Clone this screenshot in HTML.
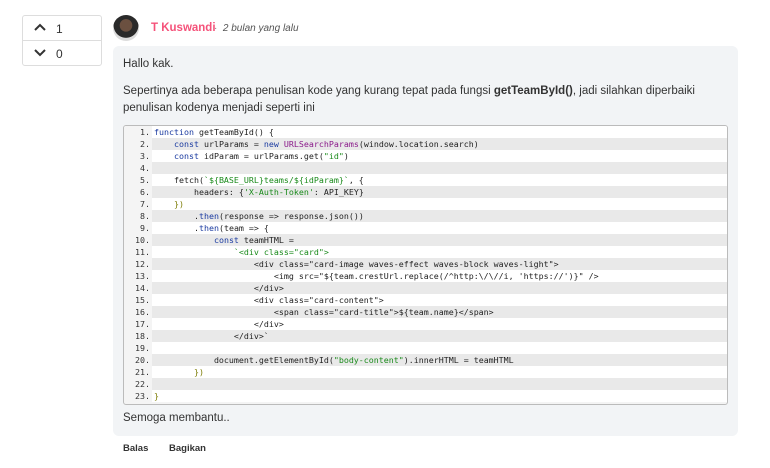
<!DOCTYPE html>
<html><head><meta charset="utf-8"><style>
body{margin:0;width:770px;height:468px;background:#fff;font-family:"Liberation Sans",sans-serif;color:#333;position:relative;overflow:hidden}
.vote{position:absolute;left:22px;top:15px;width:78px;height:49px;border:1px solid #ddd;border-radius:3px}
.vote div{height:24px;position:relative;font-size:12px}
.vote div:first-child{border-bottom:1px solid #ddd}
.vote span{position:absolute;left:33px;top:6px}
.vote svg{position:absolute;left:11px;top:7px}
.av{position:absolute;left:113px;top:15px;width:26px;height:26px;border-radius:50%;background:radial-gradient(circle at 50% 40%,#6b5040 0 30%,#2a2a2a 32% 60%,#ddd 62%)}
.name{position:absolute;left:151px;top:22px;font-size:11.5px;color:#f5527a;font-weight:bold}
.time{position:absolute;left:214px;top:23px;font-size:10px;color:#555;font-style:italic}
.bub{position:absolute;left:113px;top:46px;width:625px;height:390px;background:#f2f4f6;border-radius:6px}
.p{position:absolute;left:123px;font-size:11.5px;color:#333;line-height:17px}
.code{position:absolute;left:123px;top:125px;width:603px;height:278px;border:1px solid #bbb;border-radius:3px;background:#f4f4f4;overflow:hidden}
.row{height:12px;line-height:12px;font-family:"DejaVu Sans Mono",monospace;font-size:8.3px;white-space:pre;position:relative}
.row b{font-weight:normal;display:inline-block;width:26px;text-align:right;color:#333;padding-right:2px;background:#f4f4f4}
.row i{font-style:normal;display:inline-block;width:575px;padding-left:2px;color:#222}
.row:nth-child(odd) i{background:#fff}
.row:nth-child(even) i{background:#e9e9e9}
.k{color:#1a3aa0}.s{color:#198a1a}.f{color:#8a1a8a}.o{color:#7a7a00}
.act{position:absolute;top:443px;font-size:9.5px;font-weight:bold;color:#333}
</style></head><body>
<div class="vote"><div><svg width="12" height="9" viewBox="0 0 12 9"><path d="M1 7L6 2L11 7" stroke="#333" stroke-width="2" fill="none"/></svg><span>1</span></div><div><svg width="12" height="9" viewBox="0 0 12 9"><path d="M1 2L6 7L11 2" stroke="#333" stroke-width="2" fill="none"/></svg><span>0</span></div></div>
<div class="av"></div>
<div class="name">T Kuswandi</div>
<div class="time"><span style="font-style:normal;color:#888">·</span>&nbsp; 2 bulan yang lalu</div>
<div class="bub"></div>
<div class="p" style="top:56px">Hallo kak.</div>
<div class="p" style="top:83px;width:600px">Sepertinya ada beberapa penulisan kode yang kurang tepat pada fungsi <b>getTeamById()</b>, jadi silahkan diperbaiki penulisan kodenya menjadi seperti ini</div>
<div class="code">
<div class="row"><b>1.</b><i><span class="k">function</span> getTeamById() {</i></div>
<div class="row"><b>2.</b><i>    <span class="k">const</span> urlParams = <span class="k">new</span> <span class="f">URLSearchParams</span>(window.location.search)</i></div>
<div class="row"><b>3.</b><i>    <span class="k">const</span> idParam = urlParams.get(<span class="s">"id"</span>)</i></div>
<div class="row"><b>4.</b><i> </i></div>
<div class="row"><b>5.</b><i>    fetch(<span class="s">`${BASE_URL}teams/${idParam}`</span>, {</i></div>
<div class="row"><b>6.</b><i>        headers: {<span class="s">'X-Auth-Token'</span>: API_KEY}</i></div>
<div class="row"><b>7.</b><i>    <span class="o">})</span></i></div>
<div class="row"><b>8.</b><i>        .<span class="k">then</span>(response =&gt; response.json())</i></div>
<div class="row"><b>9.</b><i>        .<span class="k">then</span>(team =&gt; {</i></div>
<div class="row"><b>10.</b><i>            <span class="k">const</span> teamHTML =</i></div>
<div class="row"><b>11.</b><i>                <span class="s">`&lt;div class="card"&gt;</span></i></div>
<div class="row"><b>12.</b><i class="s">                    &lt;div class="card-image waves-effect waves-block waves-light"&gt;</i></div>
<div class="row"><b>13.</b><i class="s">                        &lt;img src="${team.crestUrl.replace(/^http:\/\//i, 'https://')}" /&gt;</i></div>
<div class="row"><b>14.</b><i class="s">                    &lt;/div&gt;</i></div>
<div class="row"><b>15.</b><i class="s">                    &lt;div class="card-content"&gt;</i></div>
<div class="row"><b>16.</b><i class="s">                        &lt;span class="card-title"&gt;${team.name}&lt;/span&gt;</i></div>
<div class="row"><b>17.</b><i class="s">                    &lt;/div&gt;</i></div>
<div class="row"><b>18.</b><i class="s">                &lt;/div&gt;`</i></div>
<div class="row"><b>19.</b><i> </i></div>
<div class="row"><b>20.</b><i>            document.getElementById(<span class="s">"body-content"</span>).innerHTML = teamHTML</i></div>
<div class="row"><b>21.</b><i>        <span class="o">})</span></i></div>
<div class="row"><b>22.</b><i> </i></div>
<div class="row"><b>23.</b><i><span class="o">}</span></i></div>
</div>
<div class="p" style="top:410px">Semoga membantu..</div>
<div class="act" style="left:123px">Balas</div>
<div class="act" style="left:169px">Bagikan</div>
</body></html>
